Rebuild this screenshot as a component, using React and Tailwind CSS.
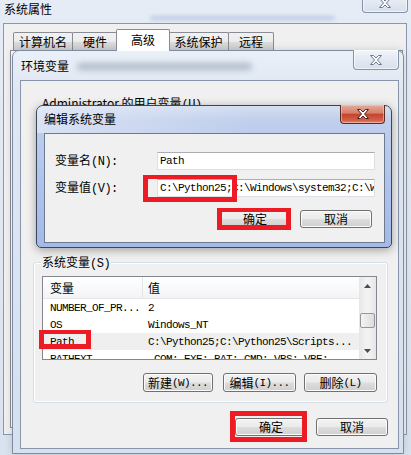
import React from 'react';

const dataFont = "font-['Liberation_Mono',monospace] text-[11px] tracking-[-0.6px]";
const labelLatin = "font-['Liberation_Mono',monospace] text-[12px] tracking-[-0.5px]";

function CloseX({ active }) {
  return (
    <svg width="12" height="10" viewBox="0 0 12 10">
      <polygon
        points="0.5,0.5 3.5,0.5 6,3 8.5,0.5 11.5,0.5 7.5,5 11.5,9.5 8.5,9.5 6,7 3.5,9.5 0.5,9.5 4.5,5"
        fill={active ? '#ffffff' : '#f7f9fc'}
        stroke={active ? '#4a2219' : '#6e7a8c'}
        strokeWidth="1"
        strokeLinejoin="round"
      />
    </svg>
  );
}

function InactiveClose({ className }) {
  return (
    <div className={`flex items-center justify-center rounded-b-[4px] border border-t-0 border-[#8592a8] bg-[linear-gradient(180deg,#f2f5fa,#e3e9f2_50%,#d8e0ec)] shadow-[inset_0_0_0_1px_rgba(255,255,255,0.6)] ${className}`}>
      <CloseX />
    </div>
  );
}

function RedClose() {
  return (
    <div className="flex h-[19px] w-[45px] items-center justify-center rounded-b-[4px] border border-t-0 border-[#5c2a22] bg-[linear-gradient(180deg,#e8a99a,#d47f6c_45%,#c4442f_52%,#d26048_85%,#e0907a)] shadow-[inset_0_0_0_1px_rgba(255,210,200,0.5)]">
      <CloseX active />
    </div>
  );
}

function Btn({ children, className, focused }) {
  return (
    <div
      className={`flex items-center justify-center rounded-[3px] border bg-[linear-gradient(180deg,#f2f2f2_0%,#ebebeb_48%,#dddddd_52%,#cfcfcf_100%)] ${
        focused ? 'border-[#3c7fb1] shadow-[inset_0_0_0_1px_#b8e0f8]' : 'border-[#707070] shadow-[inset_0_0_0_1px_#fbfbfb]'
      } ${className}`}
    >
      {children}
    </div>
  );
}

function Tab({ children, className }) {
  return (
    <div className={`flex h-[18px] items-center justify-center rounded-t-[2px] border border-b-0 border-[#898c95] bg-[linear-gradient(180deg,#f2f2f2,#ebebeb_50%,#dddddd_51%,#cfcfcf)] pt-[1px] ${className}`}>
      {children}
    </div>
  );
}

function Arrow({ down }) {
  return (
    <svg width="7" height="4" viewBox="0 0 7 4">
      <polygon points={down ? '0,0 7,0 3.5,4' : '3.5,0 7,4 0,4'} fill="#4d4d4d" />
    </svg>
  );
}

function OuterWindow() {
  return (
    <div className="absolute inset-0 flex flex-col bg-[linear-gradient(180deg,#e6ecf5,#dee6f1_60%,#d9e2ef)]">
      <div className="relative flex h-[23px] items-start">
        <span className="ml-[4px] mt-[2px]">系统属性</span>
        <div className="absolute left-[150px] top-[16px] h-[4px] w-[185px] rounded-full bg-[#8fa8d8] opacity-50 blur-[2px]" />
        <div className="ml-auto mr-[3px] -mt-[7px]">
          <InactiveClose className="h-[20px] w-[46px]" />
        </div>
      </div>
      <div className="ml-[3px] h-[412px] w-[404px] border border-[#8a98ae] bg-[#f0f0f0] pl-[6px] pt-[5px]">
        <div className="ml-[3px] flex h-[21px] items-end">
          <Tab className="w-[60px]">计算机名</Tab>
          <Tab className="-ml-[1px] w-[46px]">硬件</Tab>
          <div className="relative z-10 -mb-[1px] -ml-[2px] flex h-[22px] w-[54px] items-start justify-center rounded-t-[2px] border border-b-0 border-[#898c95] bg-white pt-[3px]">
            高级
          </div>
          <Tab className="-ml-[2px] w-[61px]">系统保护</Tab>
          <Tab className="-ml-[1px] w-[46px]">远程</Tab>
        </div>
        <div className="h-[378px] w-[393px] border border-[#898c95] bg-white" />
      </div>
    </div>
  );
}

const rows = [
  { name: 'NUMBER_OF_PR...', value: '2' },
  { name: 'OS', value: 'Windows_NT' },
  { name: 'Path', value: 'C:\\Python25;C:\\Python25\\Scripts...', selected: true },
  { name: 'PATHEXT', value: '.COM;.EXE;.BAT;.CMD;.VBS;.VBE;' },
];

function SystemVarList() {
  return (
    <div className="flex h-[84px] border border-[#828790] bg-white">
      <div className="flex flex-1 flex-col overflow-hidden">
        <div className="flex h-[22px] shrink-0 border-b border-[#e5e5e5] bg-[linear-gradient(180deg,#ffffff,#f3f4f6)]">
          <div className="flex w-[100px] items-center border-r border-[#e3e5e8] pl-[7px]">变量</div>
          <div className="flex items-center pl-[5px]">值</div>
        </div>
        {rows.map((r) => (
          <div key={r.name} className={`flex h-[17px] shrink-0 items-center whitespace-nowrap ${r.selected ? 'bg-[#efefef]' : ''}`}>
            <div className={`w-[100px] pl-[7px] ${dataFont}`}>{r.name}</div>
            <div className={`pl-[5px] ${dataFont}`}>{r.value}</div>
          </div>
        ))}
      </div>
      <div className="flex w-[17px] flex-col bg-[linear-gradient(90deg,#e6e6e6,#f2f2f2_40%,#f2f2f2_60%,#e6e6e6)]">
        <div className="flex h-[17px] items-center justify-center">
          <Arrow />
        </div>
        <div className="h-[19px]" />
        <div className="mx-[1px] h-[15px] rounded-[2px] border border-[#979797] bg-[linear-gradient(90deg,#f4f4f4,#e8e8e8_50%,#dcdcdc)]" />
        <div className="flex-1" />
        <div className="flex h-[17px] items-center justify-center">
          <Arrow down />
        </div>
      </div>
    </div>
  );
}

function EnvWindow() {
  return (
    <div className="absolute left-[12px] top-[50px] flex h-[404px] w-[392px] flex-col rounded-t-[7px] border border-[#7d8ca3] bg-[linear-gradient(180deg,#eaf0f8,#dfe7f2_40px,#d6e0ee)] shadow-[0_0_8px_rgba(0,0,0,0.15)]">
      <div className="relative flex h-[29px] items-start">
        <span className="ml-[8px] mt-[8px]">环境变量</span>
        <div className="absolute left-[64px] top-[12px] h-[7px] w-[175px] rounded-full bg-[#5d6b82] opacity-40 blur-[3px]" />
        <div className="ml-auto mr-[4px] -mt-[1px]">
          <InactiveClose className="h-[20px] w-[46px]" />
        </div>
      </div>
      <div className="ml-[7px] h-[369px] w-[379px] border border-[#8795aa] bg-[#f0f0f0] pl-[12px] pr-[10px]">
        <div className="h-[181px] pl-[9px] pt-[15px]">
          Administrator 的用户变量<span className={labelLatin}>(U)</span>
        </div>
        <div className="relative h-[141px] rounded-[3px] border border-[#d5dfe5] pl-[8px] pr-[10px] pt-[13px] shadow-[inset_0_0_0_1px_#ffffff]">
          <div className="absolute left-[7px] top-[-8px] bg-[#f0f0f0] px-[1px]">
            系统变量<span className={labelLatin}>(S)</span>
          </div>
          <SystemVarList />
          <div className="mt-[13px] flex justify-end">
            <Btn className="h-[19px] w-[70px]">
              新建<span className={dataFont}>(W)...</span>
            </Btn>
            <Btn className="ml-[10px] h-[19px] w-[73px]">
              编辑<span className={dataFont}>(I)...</span>
            </Btn>
            <Btn className="ml-[8px] h-[19px] w-[73px]">
              删除<span className={dataFont}>(L)</span>
            </Btn>
          </div>
        </div>
        <div className="mt-[15px] flex justify-end gap-[9px]">
          <Btn className="h-[18px] w-[72px]">确定</Btn>
          <Btn className="h-[18px] w-[72px]">取消</Btn>
        </div>
      </div>
    </div>
  );
}

function Field({ children }) {
  return (
    <div className={`h-[18px] w-[218px] overflow-hidden whitespace-nowrap border border-[#dbdfe6] border-t-[#abadb3] bg-white pl-[2px] leading-[16px] ${dataFont}`}>
      {children}
    </div>
  );
}

function EditDialog() {
  return (
    <div className="absolute left-[36px] top-[105px] flex h-[143px] w-[356px] flex-col rounded-t-[7px] rounded-b-[5px] border border-[#3b4658] bg-[linear-gradient(180deg,#d5dff0_0px,#c0cfec_14px,#adc2eb_60%,#a3b9e8)] shadow-[0_2px_10px_rgba(0,0,0,0.35)]">
      <div className="relative flex h-[27px] items-start rounded-t-[6px] bg-[linear-gradient(90deg,rgba(235,240,250,0.6),rgba(235,240,250,0)_60%)]">
        <span className="ml-[7px] mt-[6px]">编辑系统变量</span>
        <div className="ml-auto mr-[6px] -mt-[1px]">
          <RedClose />
        </div>
      </div>
      <div className="ml-[7px] h-[110px] w-[341px] border border-[#6d7b91] bg-[#f0f0f0] pt-[18px]">
        <div className="flex h-[18px] items-center">
          <span className="w-[112px] pl-[10px]">
            变量名<span className={labelLatin}>(N):</span>
          </span>
          <Field>Path</Field>
        </div>
        <div className="mt-[9px] flex h-[18px] items-center">
          <span className="w-[112px] pl-[10px]">
            变量值<span className={labelLatin}>(V):</span>
          </span>
          <Field>C:\Python25;C:\Windows\system32;C:\Windows;C:\Windows\System32\Wbem</Field>
        </div>
        <div className="mt-[13px] flex justify-end gap-[9px] pr-[12px]">
          <Btn focused className="h-[18px] w-[72px]">确定</Btn>
          <Btn className="h-[18px] w-[72px]">取消</Btn>
        </div>
      </div>
    </div>
  );
}

export default function App() {
  return (
    <div className="relative h-[455px] w-[411px] overflow-hidden font-['Noto_Sans_CJK_SC','Noto_Sans',sans-serif] text-[12px] leading-[14px] text-black">
      <OuterWindow />
      <EnvWindow />
      <EditDialog />
      <div className="absolute left-[143px] top-[175px] h-[27px] w-[94px] border-[5px] border-t-[4px] border-[#ed1c24]" />
      <div className="absolute left-[217px] top-[208px] h-[22px] w-[74px] border-[5px] border-t-[4px] border-[#ed1c24]" />
      <div className="absolute left-[39px] top-[330px] h-[19px] w-[52px] border-[5px] border-t-[4px] border-[#ed1c24]" />
      <div className="absolute left-[230px] top-[411px] h-[31px] w-[77px] border-[5px] border-[#ed1c24]" />
    </div>
  );
}
